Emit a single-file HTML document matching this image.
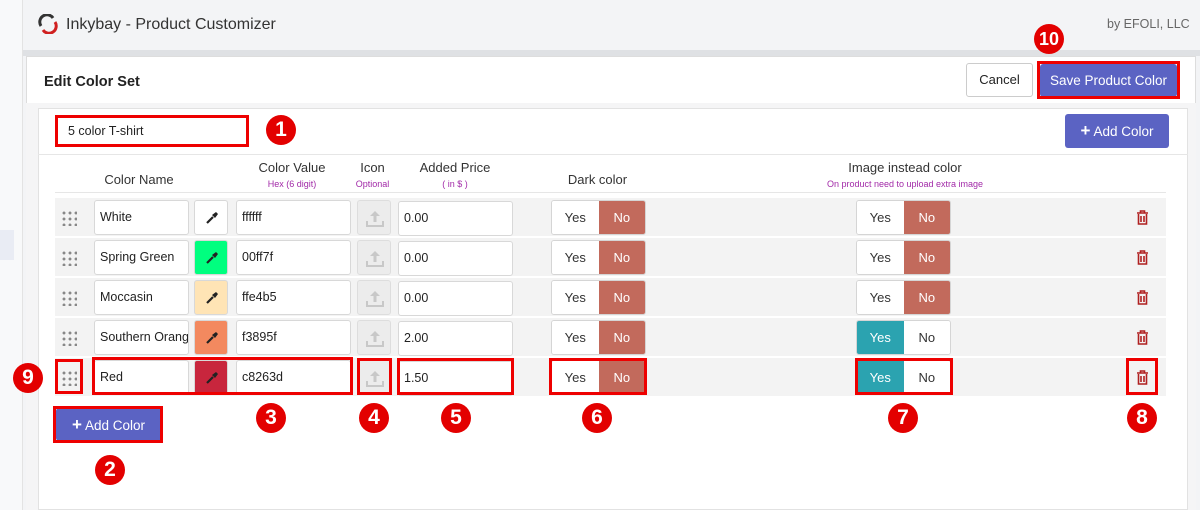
<!DOCTYPE html>
<html><head><style>
*{box-sizing:border-box;margin:0;padding:0}
body{width:1200px;height:510px;overflow:hidden;background:#f3f4f6;font-family:"Liberation Sans",sans-serif;position:relative;color:#222;font-size:13px}
.a{position:absolute}
.inp{position:absolute;background:#fff;border:1px solid #d8d8d8;border-radius:3px;height:35px;line-height:33px;padding-left:5px;font-size:12.5px;color:#222;overflow:hidden;white-space:nowrap}
.row{position:absolute;left:55px;width:1111px;height:38px;background:#f3f3f3}
.yn{position:absolute;height:35px;width:95px;border:1px solid #d5d5d5;border-radius:3px;overflow:hidden;display:flex;font-size:13px}
.yn span{flex:1;text-align:center;line-height:33px;background:#fff;color:#333}
.yn .no{background:#c26a5c;color:#fff}
.yn .ty{background:#2ba3b0;color:#fff}
.dots{position:absolute;width:16px;height:16px;background:radial-gradient(circle,#888 1.3px,transparent 1.6px) 0 0/6px 6px}
.pick{position:absolute;width:34px;height:35px;border:1px solid #d8d8d8;border-radius:3px}
.ic{position:absolute;width:34px;height:35px;background:#ececec;border:1px solid #ddd;border-radius:3px}
.num{position:absolute;width:30px;height:30px;border-radius:50%;background:#e30000;color:#fff;font-weight:bold;font-size:21px;text-align:center;line-height:30px}
.box{position:absolute;border:3px solid #e00}
.hd{position:absolute;font-size:13px;color:#333;text-align:center}
.sub{position:absolute;font-size:9px;color:#a22aa8;text-align:center}
.btn{position:absolute;background:#5b63c3;color:#fff;border-radius:3px;text-align:center;font-size:13.5px}
</style></head><body>
<div class="a" style="left:0;top:0;width:22px;height:510px;background:#f8f9fa"></div>
<div class="a" style="left:0;top:230px;width:14px;height:30px;background:#e9ecf4"></div>
<div class="a" style="left:22px;top:50px;width:1178px;height:6px;background:#dfe1e4"></div>
<div class="a" style="left:22px;top:0;width:1px;height:510px;background:#e3e3e3"></div>
<svg class="a" style="left:38px;top:14px" width="20" height="20" viewBox="0 0 20 20"><path d="M3 12A7 7 0 0 1 15 4" stroke="#333" stroke-width="3" fill="none"/><path d="M17 8A7 7 0 0 1 5 16" stroke="#d02020" stroke-width="3" fill="none"/></svg>
<div class="a" style="left:66px;top:16px;font-size:16px;color:#333">Inkybay - Product Customizer</div>
<div class="a" style="left:1107px;top:17px;font-size:12.5px;color:#666">by EFOLI, LLC</div>
<!-- modal -->
<div class="a" style="left:26px;top:56px;width:1170px;height:454px;background:#fff;border:1px solid #ddd"></div>
<div class="a" style="left:26px;top:103px;width:1170px;height:407px;background:#f5f5f6"></div>
<div class="a" style="left:44px;top:74px;font-size:14.5px;font-weight:bold;color:#222">Edit Color Set</div>
<div class="a" style="left:966px;top:63px;width:67px;height:34px;border:1px solid #ccc;border-radius:3px;background:#fff;text-align:center;line-height:32px;font-size:13px">Cancel</div>
<div class="btn" style="left:1040px;top:64px;width:137px;height:33px;line-height:33px">Save Product Color</div>
<div class="box" style="left:1037px;top:61px;width:143px;height:38px"></div>
<div class="num" style="left:1034px;top:24px;font-size:18px">10</div>
<!-- inner card -->
<div class="a" style="left:38px;top:108px;width:1150px;height:402px;background:#fff;border:1px solid #e2e2e2"></div>
<div class="a" style="left:38px;top:154px;width:1150px;height:1px;background:#e6e6e6"></div>
<div class="a" style="left:55px;top:115px;width:194px;height:32px;border:3px solid #e00;background:#fff;font-size:12.5px;line-height:26px;padding-left:10px">5 color T-shirt</div>
<div class="num" style="left:266px;top:115px">1</div>
<div class="btn" style="left:1065px;top:114px;width:104px;height:34px;line-height:34px"><b style="font-size:17px">+</b> Add Color</div>
<!-- headers -->
<div class="hd" style="left:94px;top:172px;width:90px">Color Name</div>
<div class="hd" style="left:234px;top:160px;width:116px">Color Value</div>
<div class="sub" style="left:234px;top:179px;width:116px">Hex (6 digit)</div>
<div class="hd" style="left:350px;top:160px;width:45px">Icon</div>
<div class="sub" style="left:350px;top:179px;width:45px">Optional</div>
<div class="hd" style="left:398px;top:160px;width:114px">Added Price</div>
<div class="sub" style="left:398px;top:179px;width:114px">( in $ )</div>
<div class="hd" style="left:550px;top:172px;width:95px">Dark color</div>
<div class="hd" style="left:780px;top:160px;width:250px">Image instead color</div>
<div class="sub" style="left:780px;top:179px;width:250px">On product need to upload extra image</div>
<div class="a" style="left:55px;top:192px;width:1111px;height:1px;background:#e6e6e6"></div>

<!-- rows -->
<div class="row" style="top:198px"></div><div class="row" style="top:238px"></div><div class="row" style="top:278px"></div><div class="row" style="top:318px"></div><div class="row" style="top:358px"></div>

<div id="rows"></div>
<script>
var d=[["White","#ffffff","ffffff","0.00",0,0],["Spring Green","#00ff7f","00ff7f","0.00",0,0],["Moccasin","#ffe4b5","ffe4b5","0.00",0,0],["Southern Orange","#f3895f","f3895f","2.00",0,1],["Red","#c8263d","c8263d","1.50",0,1]];
var h="";
d.forEach(function(r,i){var t=200+40*i;
h+='<div class="dots" style="left:61px;top:'+(t+10)+'px"></div>';
h+='<div class="inp" style="left:94px;top:'+t+'px;width:95px">'+r[0]+'</div>';
h+='<div class="pick" style="left:194px;top:'+t+'px;background:'+r[1]+'"><svg style="position:absolute;left:10px;top:10px" width="14" height="14" viewBox="0 0 14 14"><path d="M2 12L8 6" stroke="#222" stroke-width="2.2"/><path d="M7 4L10 7L13 3L11 1Z" fill="#222"/></svg></div>';
h+='<div class="inp" style="left:236px;top:'+t+'px;width:115px">'+r[2]+'</div>';
h+='<div class="ic" style="left:357px;top:'+t+'px"><svg style="position:absolute;left:7px;top:7px" width="20" height="20" viewBox="0 0 20 20"><path d="M10 3L5 8H8.5V14H11.5V8H15Z" fill="#c8c8c8"/><path d="M2 13V18H18V13" stroke="#c8c8c8" stroke-width="2" fill="none"/></svg></div>';
h+='<div class="inp" style="left:398px;top:'+(t+1)+'px;width:115px">'+r[3]+'</div>';
h+='<div class="yn" style="left:551px;top:'+t+'px"><span>Yes</span><span class="no">No</span></div>';
h+=r[5]?'<div class="yn" style="left:856px;top:'+t+'px"><span class="ty">Yes</span><span>No</span></div>':'<div class="yn" style="left:856px;top:'+t+'px"><span>Yes</span><span class="no">No</span></div>';
h+='<svg style="position:absolute;left:1136px;top:'+(t+10)+'px" width="13" height="15" viewBox="0 0 13 15"><path d="M1 3H12M4.5 3V1H8.5V3M2.5 4V14H10.5V4M5 6V12M8 6V12" stroke="#b02020" stroke-width="1.6" fill="none"/></svg>';
});
document.getElementById("rows").outerHTML=h;
</script>
<!-- annotation boxes row 5 -->
<div class="box" style="left:55px;top:359px;width:28px;height:35px"></div>
<div class="box" style="left:92px;top:357px;width:261px;height:38px"></div>
<div class="box" style="left:357px;top:358px;width:35px;height:37px"></div>
<div class="box" style="left:397px;top:358px;width:117px;height:37px"></div>
<div class="box" style="left:549px;top:358px;width:98px;height:37px"></div>
<div class="box" style="left:855px;top:358px;width:98px;height:37px"></div>
<div class="box" style="left:1126px;top:358px;width:32px;height:37px"></div>
<div class="btn" style="left:56px;top:408px;width:105px;height:33px;line-height:33px"><b style="font-size:17px">+</b> Add Color</div>
<div class="box" style="left:53px;top:406px;width:110px;height:37px"></div>
<div class="num" style="left:13px;top:363px">9</div>
<div class="num" style="left:95px;top:455px">2</div>
<div class="num" style="left:256px;top:403px">3</div>
<div class="num" style="left:359px;top:403px">4</div>
<div class="num" style="left:441px;top:403px">5</div>
<div class="num" style="left:582px;top:403px">6</div>
<div class="num" style="left:888px;top:403px">7</div>
<div class="num" style="left:1127px;top:403px">8</div>
</body></html>
